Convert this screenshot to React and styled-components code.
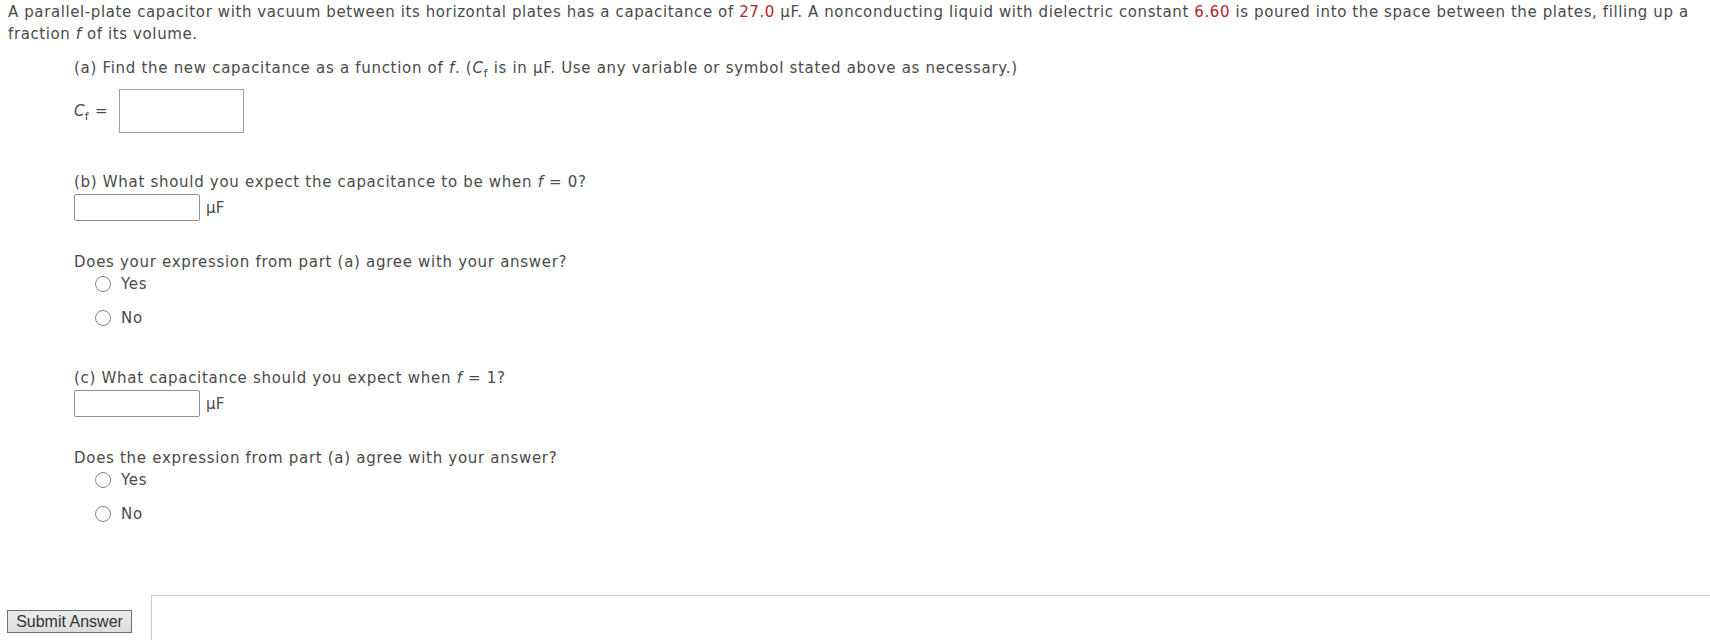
import React from 'react'
import styled, { createGlobalStyle } from 'styled-components'

const GlobalStyle = createGlobalStyle`
  html, body {
    margin: 0;
    background: #fff;
  }
  body {
    font-family: "DejaVu Sans", Verdana, sans-serif;
    font-size: 15px;
    line-height: 22px;
    letter-spacing: 0.7px;
    color: #4a4a4a;
  }
`

const parts = [
  { id: 'b', label: '(b) What should you expect the capacitance to be when ', value: '0', prompt: 'Does your expression from part (a) agree with your answer?' },
  { id: 'c', label: '(c) What capacitance should you expect when ', value: '1', prompt: 'Does the expression from part (a) agree with your answer?' },
]

function App() {
  return (
    <>
      <GlobalStyle />
      <Page>
        <Question>
          A parallel-plate capacitor with vacuum between its horizontal plates has a capacitance of <Given>27.0</Given> μF.
          A nonconducting liquid with dielectric constant <Given>6.60</Given> is poured into the space between the plates,
          filling up a fraction <Var>f</Var> of its volume.
        </Question>

        <Part>
          <Line>
            (a) Find the new capacitance as a function of <Var>f</Var>. (<Var>C</Var><Sub>f</Sub> is in μF. Use any variable or symbol stated above as necessary.)
          </Line>
          <FormulaRow>
            <span><Var>C</Var><Sub>f</Sub></span>
            <Equals>=</Equals>
            <FormulaBox />
          </FormulaRow>
        </Part>

        {parts.map((p) => (
          <Part key={p.id}>
            <Line>
              {p.label}<Var>f</Var> = {p.value}?
            </Line>
            <AnswerRow>
              <NumberBox />
              <Unit>μF</Unit>
            </AnswerRow>
            <Prompt>{p.prompt}</Prompt>
            <Options>
              <Option><Radio />Yes</Option>
              <Option><Radio />No</Option>
            </Options>
          </Part>
        ))}

        <Footer>
          <SubmitButton type="button">Submit Answer</SubmitButton>
          <FeedbackArea />
        </Footer>
      </Page>
    </>
  )
}

export default App

const Page = styled.div`
  padding: 1px 8px 0;
`

const Question = styled.p`
  margin: 0;
  letter-spacing: 0.6px;
`

const Given = styled.span`
  color: #b2242d;
`

const Var = styled.i`
  font-style: italic;
`

const Sub = styled.sub`
  font-size: 11px;
  line-height: 0;
  vertical-align: -4px;
`

const Part = styled.div`
  margin-top: 12px;
  padding-left: 66px;

  & + & {
    margin-top: 38px;
  }
`

const Line = styled.div`
  line-height: 22px;
`

const FormulaRow = styled.div`
  display: flex;
  align-items: center;
  margin-top: 10px;
  font-size: 15px;
  letter-spacing: 0.3px;
`

const Equals = styled.span`
  margin: 0 11px 0 6px;
`

const FormulaBox = styled.div`
  width: 123px;
  height: 42px;
  border: 1px solid #a0a0a0;
  background: #fff;
`

const AnswerRow = styled.div`
  display: flex;
  align-items: center;
  margin-top: 1px;
`

const NumberBox = styled.div`
  width: 124px;
  height: 25px;
  border: 1px solid #8f8f8f;
  border-radius: 2px;
  background: #fff;
`

const Unit = styled.span`
  margin-left: 6px;
  font-size: 15px;
  letter-spacing: 0.3px;
`

const Prompt = styled.div`
  margin-top: 30px;
`

const Options = styled.div`
  display: flex;
  flex-direction: column;
  gap: 12px;
  padding-left: 21px;
`

const Option = styled.label`
  display: flex;
  align-items: center;
  height: 22px;
  gap: 10px;
`

const Radio = styled.span`
  width: 14px;
  height: 14px;
  border: 1px solid #858585;
  border-radius: 50%;
  background: #fff;
`

const Footer = styled.div`
  display: flex;
  align-items: flex-start;
  margin-top: 70px;
  margin-left: -1px;
  margin-right: -8px;
`

const SubmitButton = styled.button`
  margin-top: 15px;
  width: 125px;
  height: 23px;
  padding: 0;
  font-family: "Liberation Sans", Arial, sans-serif;
  font-size: 16px;
  color: #333;
  background: linear-gradient(#ececec, #dcdcdc);
  border: 1px solid #707070;
  border-radius: 0;
`

const FeedbackArea = styled.div`
  flex: 1;
  height: 50px;
  margin-left: 19px;
  border-top: 1px solid #c8c8c8;
  border-left: 1px solid #c8c8c8;
`
